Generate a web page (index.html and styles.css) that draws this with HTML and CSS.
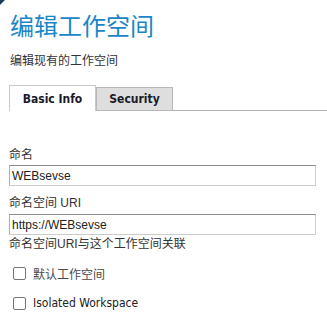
FILE: index.html
```html
<!DOCTYPE html>
<html lang="zh">
<head>
<meta charset="utf-8">
<link rel="stylesheet" href="styles.css">
</head>
<body>
<svg class="corner" width="6" height="6" viewBox="0 0 6 6"><polygon points="0,0 5,0 0,5" fill="#1d3d5c"/></svg>
<div class="page">
  <h1 class="title">编辑工作空间</h1>
  <p class="subtitle">编辑现有的工作空间</p>
  <div class="tabs">
    <div class="tab tab-active">Basic Info</div>
    <div class="tab tab-inactive">Security</div>
    <div class="tab-fill"></div>
  </div>
  <div class="form">
    <label class="field-label first">命名</label>
    <input class="text-input input-first" type="text" value="WEBsevse">
    <label class="field-label second">命名空间 URI</label>
    <input class="text-input input-second" type="text" value="https://WEBsevse">
    <p class="help">命名空间URI与这个工作空间关联</p>
    <div class="check-row row-first">
      <input class="check" type="checkbox">
      <span class="check-label">默认工作空间</span>
    </div>
    <div class="check-row row-second">
      <input class="check" type="checkbox">
      <span class="check-label latin">Isolated Workspace</span>
    </div>
  </div>
</div>
</body>
</html>
```

FILE: styles.css
```css
html, body {
  margin: 0;
  padding: 0;
  background: #ffffff;
}
body {
  font-family: "Liberation Sans", "Noto Sans CJK SC", sans-serif;
  color: #333333;
  overflow: hidden;
}
.corner {
  position: absolute;
  left: 0;
  top: 0;
}
.page {
  padding-left: 9px;
}
.title {
  margin: 0;
  padding-top: 10px;
  padding-left: 1px;
  font-family: "Noto Sans CJK SC", sans-serif;
  font-size: 24px;
  font-weight: normal;
  line-height: 30px;
  color: #1a86c6;
}
.subtitle {
  margin: 12px 0 0 1px;
  font-family: "Noto Sans CJK SC", sans-serif;
  font-size: 12px;
  line-height: 16px;
  color: #333333;
}
.tabs {
  display: flex;
  align-items: flex-end;
  margin-top: 17px;
  height: 26px;
}
.tab {
  box-sizing: border-box;
  font-family: "DejaVu Sans Condensed", "DejaVu Sans", sans-serif;
  font-weight: bold;
  font-size: 12px;
  color: #1a1a2a;
  text-align: center;
}
.tab-active {
  width: 87px;
  height: 26px;
  border: 1px solid #c9c9c9;
  border-bottom: none;
  background: #ffffff;
  line-height: 25px;
  padding-top: 1px;
}
.tab-inactive {
  width: 77px;
  height: 24px;
  border: 1px solid #b8b8b8;
  background: #dedede;
  line-height: 22px;
}
.tab-fill {
  flex: 1;
  height: 1px;
  border-bottom: 1px solid #b0b0b0;
  box-sizing: border-box;
  align-self: flex-end;
}
.form {
  display: flex;
  flex-direction: column;
  align-items: flex-start;
}
.field-label {
  display: block;
  font-size: 12px;
  line-height: 16px;
  color: #333333;
}
.field-label.first {
  margin-top: 36px;
}
.field-label.second {
  margin-top: 9px;
}
.text-input {
  box-sizing: border-box;
  width: 307px;
  height: 21px;
  margin: 0;
  padding: 0 2px;
  font-family: "Liberation Sans", sans-serif;
  font-size: 12px;
  color: #222222;
  background: #ffffff;
  border: 1px solid #cccccc;
  border-top-color: #8c8c8c;
  border-left-color: #b0b0b0;
  outline: none;
}
.input-first {
  margin-top: 2px;
}
.input-second {
  margin-top: 3px;
}
.help {
  margin: 1px 0 0 0;
  font-size: 12px;
  line-height: 16px;
  color: #333333;
}
.check-row {
  display: flex;
  align-items: center;
  height: 18px;
  padding-left: 4px;
}
.row-first {
  margin-top: 12px;
}
.row-second {
  margin-top: 12px;
}
.check {
  appearance: none;
  -webkit-appearance: none;
  box-sizing: border-box;
  width: 13px;
  height: 13px;
  margin: 0 7px 0 0;
  border: 1px solid #767676;
  border-radius: 2px;
  background: #ffffff;
}
.check-label {
  font-family: "DejaVu Sans Condensed", "Noto Sans CJK SC", sans-serif;
  font-size: 12px;
  color: #4a4a4a;
}
.check-label.latin {
  color: #222222;
}
```
